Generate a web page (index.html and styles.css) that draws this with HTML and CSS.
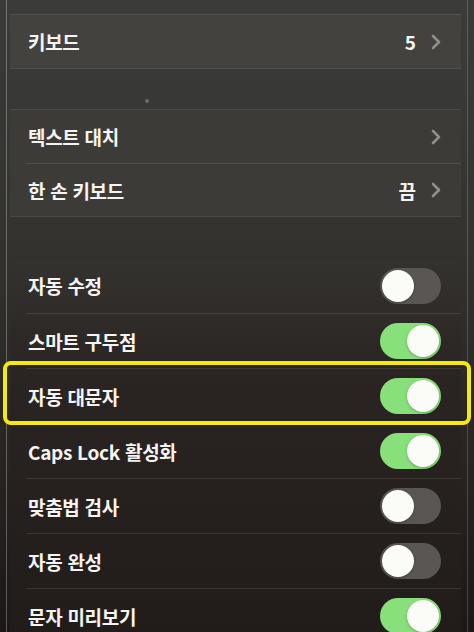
FILE: index.html
```html
<!DOCTYPE html>
<html lang="ko">
<head>
    <meta charset="UTF-8">
    <meta name="viewport" content="width=device-width, initial-scale=1.0">
    <title>키보드 설정</title>
    <link rel="stylesheet" href="styles.css">
</head>
<body>
    <div class="screen">
        <section class="group group-top">
            <div class="row">
                <span class="label">키보드</span>
                <span class="detail">
                    <span class="value">5</span>
                    <svg class="chevron" viewBox="0 0 10 16"><path d="M2 2l6 6-6 6"/></svg>
                </span>
            </div>
        </section>

        <div class="spacer"><span class="dust"></span></div>

        <section class="group group-mid">
            <div class="row">
                <span class="label">텍스트 대치</span>
                <span class="detail">
                    <svg class="chevron" viewBox="0 0 10 16"><path d="M2 2l6 6-6 6"/></svg>
                </span>
            </div>
            <div class="row">
                <span class="label">한 손 키보드</span>
                <span class="detail">
                    <span class="value">끔</span>
                    <svg class="chevron" viewBox="0 0 10 16"><path d="M2 2l6 6-6 6"/></svg>
                </span>
            </div>
        </section>

        <div class="spacer"></div>

        <section class="group group-toggles">
            <div class="row">
                <span class="label">자동 수정</span>
                <span class="toggle"><span class="knob"></span></span>
            </div>
            <div class="row">
                <span class="label">스마트 구두점</span>
                <span class="toggle on"><span class="knob"></span></span>
            </div>
            <div class="row highlight">
                <span class="label">자동 대문자</span>
                <span class="toggle on"><span class="knob"></span></span>
            </div>
            <div class="row">
                <span class="label">Caps Lock 활성화</span>
                <span class="toggle on"><span class="knob"></span></span>
            </div>
            <div class="row">
                <span class="label">맞춤법 검사</span>
                <span class="toggle"><span class="knob"></span></span>
            </div>
            <div class="row">
                <span class="label">자동 완성</span>
                <span class="toggle"><span class="knob"></span></span>
            </div>
            <div class="row">
                <span class="label">문자 미리보기</span>
                <span class="toggle on"><span class="knob"></span></span>
            </div>
        </section>
    </div>
</body>
</html>
```

FILE: styles.css
```css
body {
    margin: 0;
    height: 632px;
    overflow: hidden;
    font-family: "Noto Sans CJK KR", "Noto Sans", sans-serif;
    color: #f5f4f2;
    background: linear-gradient(#3b3c3a, #33322f 40%, #1d1817);
}

.screen {
    margin: 0 6px 0 6px;
    padding: 14px 6px 0 3px;
    border-left: 1px solid rgba(255, 255, 255, 0.28);
    border-right: 1px solid rgba(255, 255, 255, 0.18);
    min-height: 632px;
    box-sizing: border-box;
}

.group {
    border-top: 1px solid rgba(255, 255, 255, 0.08);
    border-bottom: 1px solid rgba(255, 255, 255, 0.08);
}

.group-top {
    background-color: #43423f;
}

.group-mid {
    background-color: #3d3b38;
}

.group-toggles {
    background: linear-gradient(#34322f, #2a2523 30%, #211b1a);
}

.spacer {
    height: 40px;
    display: flex;
    align-items: flex-end;
}

.dust {
    width: 4px;
    height: 4px;
    margin: 0 0 6px 135px;
    border-radius: 50%;
    background-color: #6c6c6a;
}

.row {
    position: relative;
    height: 53px;
    margin-left: 16px;
    padding: 0 20px 0 2px;
    display: flex;
    align-items: center;
    justify-content: space-between;
    box-sizing: border-box;
}

.row + .row {
    border-top: 1px solid rgba(255, 255, 255, 0.1);
}

.group-toggles .row {
    height: 55px;
}

.label {
    font-size: 19px;
    font-weight: 600;
    letter-spacing: -0.3px;
}

.detail {
    display: flex;
    align-items: center;
    gap: 15px;
}

.value {
    font-size: 19px;
    font-weight: 600;
}

.chevron {
    width: 10px;
    height: 16px;
}

.chevron path {
    fill: none;
    stroke: #8f8e8b;
    stroke-width: 2.6;
    stroke-linecap: round;
    stroke-linejoin: round;
}

.toggle {
    width: 61px;
    height: 36px;
    padding: 2px;
    border-radius: 18px;
    background-color: #5a5653;
    display: flex;
    justify-content: flex-start;
    box-sizing: border-box;
}

.toggle.on {
    background-color: #88e07a;
    justify-content: flex-end;
}

.knob {
    width: 32px;
    height: 32px;
    border-radius: 50%;
    background-color: #fbfbf8;
    box-shadow: 0 1px 3px rgba(0, 0, 0, 0.25);
}

.highlight::after {
    content: "";
    position: absolute;
    top: -8px;
    bottom: -2px;
    left: -23px;
    right: -10px;
    border: 4px solid #f6ea0c;
    border-radius: 8px;
}
```
